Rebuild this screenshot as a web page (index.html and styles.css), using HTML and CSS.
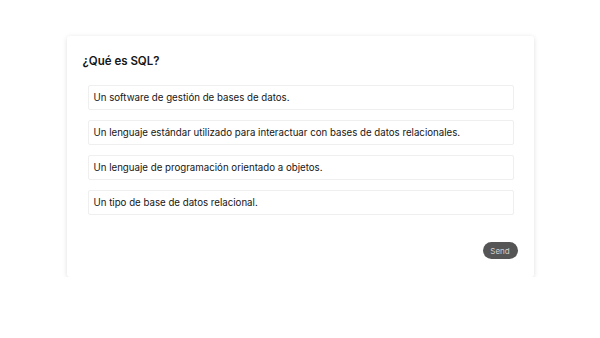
FILE: index.html
```html
<!DOCTYPE html>
<html lang="es">
<head>
<meta charset="UTF-8">
<meta name="viewport" content="width=device-width, initial-scale=1.0">
<title>Quiz</title>
<link rel="stylesheet" href="styles.css">
</head>
<body>
<div class="quiz-card">
<h2 class="question">¿Qué es SQL?</h2>
<div class="options">
<div class="option">Un software de gestión de bases de datos.</div>
<div class="option">Un lenguaje estándar utilizado para interactuar con bases de datos relacionales.</div>
<div class="option">Un lenguaje de programación orientado a objetos.</div>
<div class="option">Un tipo de base de datos relacional.</div>
</div>
<div class="actions">
<button class="send-button">Send</button>
</div>
</div>
</body>
</html>
```

FILE: styles.css
```css
body {
    font-family: Inter, 'Liberation Sans', sans-serif;
    margin: 0;
    padding: 36px 0 0;
    background-color: #ffffff;
    color: #161616;
}
.quiz-card {
    width: 467px;
    margin: 0 auto;
    box-sizing: border-box;
    padding: 18px 16px 18px;
    background-color: white;
    border-radius: 3px;
    box-shadow: 0 1px 5px rgba(0, 0, 0, 0.13);
}
.question {
    font-size: 11.5px;
    font-weight: 600;
    margin: 0 0 17px;
}
.options {
    display: flex;
    flex-direction: column;
    gap: 10px;
    margin: 0 4px 0 5px;
}
.option {
    height: 25px;
    line-height: 24px;
    padding: 0 5px;
    font-size: 9.7px;
    border: 1px solid #efefef;
    border-radius: 2px;
    box-sizing: border-box;
}
.actions {
    display: flex;
    justify-content: flex-end;
    margin-top: 27px;
}
.send-button {
    width: 35px;
    height: 17px;
    padding: 0;
    border: none;
    border-radius: 9px;
    background-color: #555555;
    color: #d0d0d0;
    font-family: inherit;
    font-size: 8px;
    cursor: pointer;
}
```
